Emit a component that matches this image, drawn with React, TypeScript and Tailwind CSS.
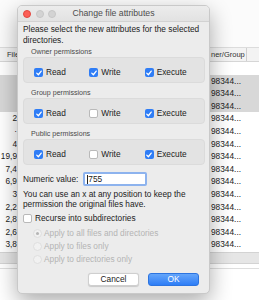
import React from "react";

// only the part of each size left of the dialog is visible
const sizes = ["", "", "", "2", "·", "4", "19,9", "7,4", "6,9", "3", "2,2", "2,8", "2,6", "3,8"];

function Check({ on }: { on: boolean }) {
  if (on) {
    return (
      <span className="w-[9px] h-[9px] rounded-[2px] bg-[#2f7df6] flex items-center justify-center flex-shrink-0">
        <svg viewBox="0 0 10 10" className="w-[8px] h-[8px]">
          <path d="M2.2 5.2 L4.2 7.2 L7.8 2.6" fill="none" stroke="white" strokeWidth="1.6" strokeLinecap="round" strokeLinejoin="round" />
        </svg>
      </span>
    );
  }
  return <span className="w-[9px] h-[9px] rounded-[2px] border flex-shrink-0 bg-white border-[#b9b9b9]" />;
}

function Radio({ on }: { on: boolean }) {
  return (
    <span className="w-[9px] h-[9px] rounded-full bg-[#f1f1f1] border border-[#dedede] flex items-center justify-center flex-shrink-0">
      {on && <span className="w-[3px] h-[3px] rounded-full bg-[#b5b5b5]" />}
    </span>
  );
}

function PermBox({ label, perms }: { label: string; perms: boolean[] }) {
  const names = ["Read", "Write", "Execute"];
  return (
    <div>
      <div className="h-[10px] leading-[10px] text-[7.1px] text-[#4a4a4a] pl-[8px]">{label}</div>
      <div className="h-[26px] rounded-[4px] bg-[#e3e3e3] border border-[#dbdbdb] grid grid-cols-3 pl-[10px] pr-[4px] pt-[10px]">
        {names.map((n, i) => (
          <div key={n} className="flex items-center gap-[3px] h-[9px]">
            <Check on={perms[i]} />
            <span className="text-[8.3px] text-[#222]">{n}</span>
          </div>
        ))}
      </div>
    </div>
  );
}

export default function App() {
  return (
    <div className="relative w-[259px] h-[300px] overflow-hidden bg-white font-['Liberation_Sans',Arial,sans-serif]">
      {/* file list in background window */}
      <div className="flex flex-col">
        <div className="h-[48px] bg-[#fbfbfb] border-b border-[#dcdcdc]" />
        <div className="h-[14px] bg-[#f3f3f3] border-b border-[#d6d6d6] flex items-center text-[7.5px] text-[#333]">
          <div className="w-[17px] pl-[7px]">File</div>
          <div className="w-[194px]" />
          <div className="w-[36px] h-full flex items-center border-r border-[#cfcfcf]">ner/Group</div>
        </div>
        <div className="h-[12.6px]" />
        {sizes.map((s, i) => (
          <div
            key={i}
            className={`h-[12.6px] flex items-center text-[8.3px] text-[#222] ${i < 3 ? "bg-[#d8d8d8]" : ""}`}
          >
            <div className="w-[17px] text-right">{s}</div>
            <div className="flex-1" />
            <div className="w-[32px]">98344...</div>
            <div className="w-[16px]" />
          </div>
        ))}
        <div className="h-[12px] mt-[1px] bg-[#e6e6e6] border-t border-b border-[#d3d3d3]" />
        <div className="h-[5px] border-b border-[#dedede]" />
      </div>

      {/* dialog */}
      <div className="absolute left-[17px] top-[5px] w-[193px] h-[289px] rounded-[5px] bg-[#ececec] border border-[#c9c9c9] shadow-[0_8px_22px_rgba(0,0,0,0.33)] flex flex-col overflow-hidden">
        <div className="h-[16px] flex-shrink-0 relative flex items-center justify-center bg-gradient-to-b from-[#ececec] to-[#e2e2e2] border-b border-[#d2d2d2]">
          <div className="absolute left-[5px] top-[4px] flex gap-[4.5px]">
            <span className="w-[8px] h-[8px] rounded-full bg-[#fc5f57] border border-[#e2463f]" />
            <span className="w-[8px] h-[8px] rounded-full bg-[#d3d3d3] border border-[#c6c6c6]" />
            <span className="w-[8px] h-[8px] rounded-full bg-[#d3d3d3] border border-[#c6c6c6]" />
          </div>
          <span className="text-[8.7px] text-[#4d4d4d]">Change file attributes</span>
        </div>

        <div className="flex flex-col pl-[5px] pr-[4px] pt-[2px]">
          <p className="text-[8.3px] leading-[10.5px] text-[#222]">
            Please select the new attributes for the selected directories.
          </p>
          <div className="mt-[2px] flex flex-col gap-[5px]">
            <PermBox label="Owner permissions" perms={[true, true, true]} />
            <PermBox label="Group permissions" perms={[true, false, true]} />
            <PermBox label="Public permissions" perms={[true, false, true]} />
          </div>

          <div className="mt-[7px] flex items-center gap-[5px]">
            <span className="text-[8.3px] text-[#222]">Numeric value:</span>
            <div className="w-[64px] h-[14px] bg-white border-2 border-[#8db3ee] rounded-[2px] flex items-center pl-[2px]">
              <span className="text-[8.3px] text-[#222] border-l border-[#222] leading-[9px]">755</span>
            </div>
          </div>

          <p className="mt-[3px] text-[8.3px] leading-[10px] text-[#222]">
            You can use an x at any position to keep the permission the original files have.
          </p>

          <div className="mt-[4px] h-[10px] flex items-center gap-[3px]">
            <Check on={false} />
            <span className="text-[8.3px] text-[#222]">Recurse into subdirectories</span>
          </div>

          <div className="mt-[5px] pl-[10px] flex flex-col gap-[3px] text-[8.3px] text-[#b4b4b4]">
            <div className="h-[10px] flex items-center gap-[2px]">
              <Radio on={true} />
              <span>Apply to all files and directories</span>
            </div>
            <div className="h-[10px] flex items-center gap-[2px]">
              <Radio on={false} />
              <span>Apply to files only</span>
            </div>
            <div className="h-[10px] flex items-center gap-[2px]">
              <Radio on={false} />
              <span>Apply to directories only</span>
            </div>
          </div>

          <div className="mt-[9px] flex justify-end gap-[9px] pr-[6px]">
            <button
              type="button"
              className="w-[51px] h-[13px] rounded-[3px] bg-white border border-[#cfcfcf] shadow-[0_0.5px_1px_rgba(0,0,0,0.15)] text-[8.3px] text-[#222] leading-none"
            >
              Cancel
            </button>
            <button
              type="button"
              className="w-[51px] h-[13px] rounded-[3px] bg-gradient-to-b from-[#64a5fa] to-[#2d7df6] border border-[#2c74e0] text-[8.3px] text-white leading-none"
            >
              OK
            </button>
          </div>
        </div>
      </div>
    </div>
  );
}
